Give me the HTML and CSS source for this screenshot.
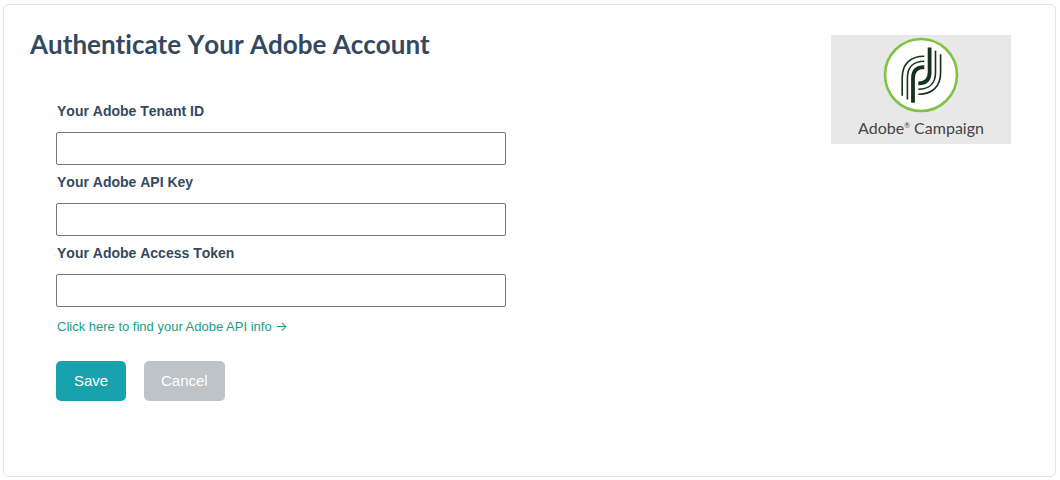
FILE: index.html
```html
<!DOCTYPE html>
<html lang="en">
<head>
<meta charset="utf-8">
<meta name="viewport" content="width=device-width, initial-scale=1">
<title>Authenticate Your Adobe Account</title>
<link rel="stylesheet" href="styles.css">
</head>
<body>
<main class="card">
  <div class="content">
    <h1 class="title">Authenticate Your Adobe Account</h1>
    <form class="form">
      <label class="label" for="tenant">Your Adobe Tenant ID</label>
      <input class="input" id="tenant" type="text">
      <label class="label" for="key">Your Adobe API Key</label>
      <input class="input" id="key" type="text">
      <label class="label" for="token">Your Adobe Access Token</label>
      <input class="input" id="token" type="text">
      <a class="help" href="#">Click here to find your Adobe API info <span class="arrow">→</span></a>
      <div class="actions">
        <button class="button save" type="submit">Save</button>
        <button class="button cancel" type="button">Cancel</button>
      </div>
    </form>
  </div>
  <div class="brand">
    <svg class="mark" viewBox="52 2 76 76" aria-hidden="true">
      <circle cx="90" cy="40" r="36" fill="#fff" stroke="#80c342" stroke-width="2.6"/>
      <g fill="none" stroke="#17301f">
        <path stroke-width="3.8" d="M82 67.8V43C82 36 86 32.2 93.3 32.2"/>
        <path stroke-width="3.8" d="M98.6 12.6V37.5C98.6 45 94.6 48.4 87.3 48.4"/>
        <path stroke-width="1.6" d="M76.4 64.6V43C76.4 32 82.6 26.2 93.3 26.2"/>
        <path stroke-width="1.6" d="M71.2 60.8V43C71.2 29 79.2 21.2 93.3 21.2"/>
        <path stroke-width="1.6" d="M104.5 15.8V37.5C104.5 48.5 98 54.3 87.3 54.3"/>
        <path stroke-width="1.6" d="M109.6 19.2V37.5C109.6 51.5 101.4 59.3 87.3 59.3"/>
      </g>
    </svg>
    <div class="brand-name">Adobe<sup class="reg">®</sup> Campaign</div>
  </div>
</main>
</body>
</html>
```
FILE: styles.css
```css
* { box-sizing: border-box; }
body {
  margin: 0;
  padding: 4px 4px 3px 3px;
  min-height: 100vh;
  display: flex;
  background: #fff;
  color: #34495e;
  font-family: "Liberation Sans", Arial, sans-serif;
}
.card {
  flex: 1;
  display: flex;
  justify-content: space-between;
  align-items: flex-start;
  gap: 24px;
  padding: 23px 44px 24px 26px;
  border: 1px solid #e1e5e6;
  border-radius: 6px;
}
.content { flex: 1; }
.title {
  margin: 0;
  font: bold 26px/32px Lato, sans-serif;
  font-variant-ligatures: none;
  font-kerning: none;
}
.form {
  display: flex;
  flex-direction: column;
  align-items: flex-start;
  max-width: 476px;
  padding: 34px 0 0 26px;
}
.label {
  padding: 2px 0 6px 1px;
  font-size: 14px;
  font-weight: bold;
  line-height: 30px;
  font-kerning: none;
}
.input {
  width: 100%;
  height: 33px;
  padding: 4px 8px;
  border: 1px solid #767676;
  border-radius: 2px;
  background: #fff;
  font: inherit;
}
.help {
  margin: 10px 0 25px 1px;
  color: #16a085;
  font-size: 13px;
  line-height: 19px;
  text-decoration: none;
}
.arrow { font-family: Inter, sans-serif; }
.actions { display: flex; gap: 18px; }
.button {
  min-width: 70px;
  height: 40px;
  padding: 0 17px 2px;
  border: 0;
  border-radius: 5px;
  color: #fff;
  font: 15px "Liberation Sans", Arial, sans-serif;
}
.save { background: #18a2ad; }
.cancel { background: #bdc3c7; }
.brand {
  display: flex;
  flex-direction: column;
  align-items: center;
  width: 180px;
  margin-top: 7px;
  padding: 2px 0 1px;
  background: #e8e8e8;
}
.mark { display: block; width: 76px; height: 76px; }
.brand-name {
  color: #444;
  font: 16px/30px Lato, sans-serif;
  white-space: nowrap;
}
.reg { font-size: 7px; line-height: 0; }
```
